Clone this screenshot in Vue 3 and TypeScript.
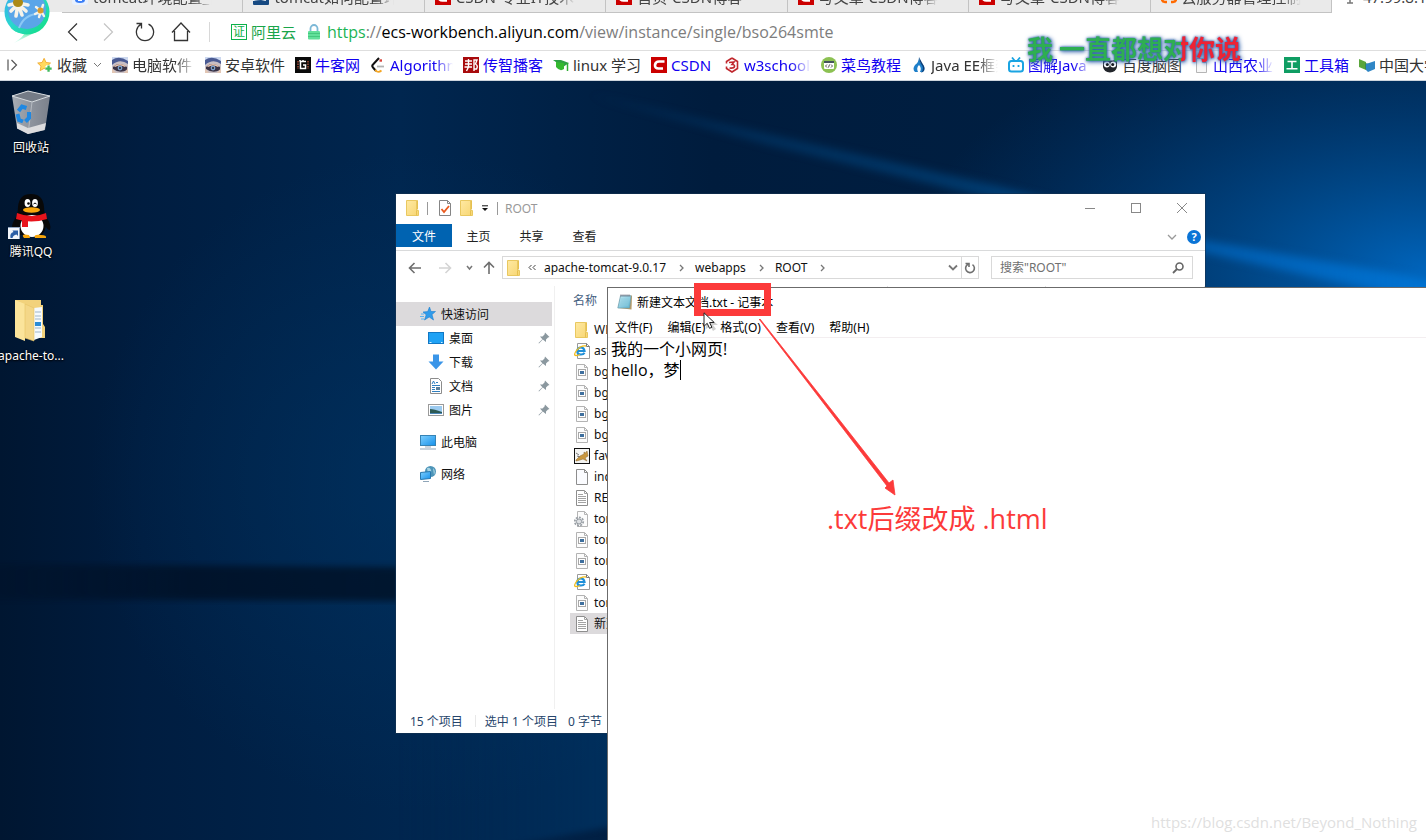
<script setup lang="ts">
import { ref } from 'vue'

interface Tab { icon: string; title: string }
interface Bookmark { icon: string; label: string; width: number; link?: boolean; fade?: boolean }
interface Place { icon: string; label: string; level: number; pinned?: boolean; active?: boolean; gap?: boolean }
interface FileRow { icon: string; name: string; selected?: boolean }

const tabs: Tab[] = [
  { icon: 'paw', title: 'tomcat环境配置_百度' },
  { icon: 'navy', title: 'tomcat如何配置环境' },
  { icon: 'csdn', title: 'CSDN-专业IT技术社区' },
  { icon: 'csdn', title: '首页-CSDN博客' },
  { icon: 'csdn', title: '写文章-CSDN博客' },
  { icon: 'csdn', title: '写文章-CSDN博客' },
  { icon: 'ali', title: '云服务器管理控制台' },
]

const bookmarks: Bookmark[] = [
  { icon: 'anime', label: '电脑软件', width: 63, fade: true },
  { icon: 'anime', label: '安卓软件', width: 60 },
  { icon: 'nowcoder', label: '牛客网', width: 45, link: true },
  { icon: 'leet', label: 'Algorithm', width: 63, link: true, fade: true },
  { icon: 'bang', label: '传智播客', width: 60, link: true },
  { icon: 'cap', label: 'linux 学习', width: 68 },
  { icon: 'csdn', label: 'CSDN', width: 43, link: true },
  { icon: 'w3', label: 'w3school', width: 67, link: true, fade: true },
  { icon: 'runoob', label: '菜鸟教程', width: 60, link: true },
  { icon: 'drop', label: 'Java EE框架', width: 67, fade: true },
  { icon: 'bili', label: '图解Java', width: 64, link: true, fade: true },
  { icon: 'owl', label: '百度脑图', width: 61 },
  { icon: 'page', label: '山西农业大', width: 61, link: true, fade: true },
  { icon: 'tool', label: '工具箱', width: 45, link: true },
  { icon: 'mooc', label: '中国大学', width: 63 },
]

const desktopIcons = [
  { icon: 'bin', label: '回收站' },
  { icon: 'qq', label: '腾讯QQ' },
  { icon: 'bigfolder', label: 'apache-to...' },
]

const ribbon = ['主页', '共享', '查看']
const crumbs = ['apache-tomcat-9.0.17', 'webapps', 'ROOT']

const places: Place[] = [
  { icon: 'star', label: '快速访问', level: 0, active: true },
  { icon: 'desk', label: '桌面', level: 1, pinned: true },
  { icon: 'down', label: '下载', level: 1, pinned: true },
  { icon: 'doc', label: '文档', level: 1, pinned: true },
  { icon: 'pic', label: '图片', level: 1, pinned: true },
  { icon: 'pc', label: '此电脑', level: 0, gap: true },
  { icon: 'net', label: '网络', level: 0, gap: true },
]

const files: FileRow[] = [
  { icon: 'folder', name: 'WEB-INF' },
  { icon: 'ie', name: 'asf-logo-wide.svg' },
  { icon: 'image', name: 'bg-button.png' },
  { icon: 'image', name: 'bg-middle.png' },
  { icon: 'image', name: 'bg-nav.png' },
  { icon: 'image', name: 'bg-upper.png' },
  { icon: 'cat', name: 'favicon.ico' },
  { icon: 'blank', name: 'index.jsp' },
  { icon: 'text', name: 'RELEASE-NOTES.txt' },
  { icon: 'gear', name: 'tomcat.css' },
  { icon: 'image', name: 'tomcat.gif' },
  { icon: 'image', name: 'tomcat.png' },
  { icon: 'ie', name: 'tomcat.svg' },
  { icon: 'image', name: 'tomcat-power.gif' },
  { icon: 'text', name: '新建文本文档.txt', selected: true },
]

const menus = ['文件(F)', '编辑(E)', '格式(O)', '查看(V)', '帮助(H)']
const note = ref('我的一个小网页!\nhello，梦')
const query = ref('')
</script>

<template>
  <div class="screen">
    <svg class="sprite" aria-hidden="true">
      <defs>
        <linearGradient id="gFolder" x1="0" y1="0" x2="1" y2="1">
          <stop offset="0" stop-color="#ffe9a2" /><stop offset="1" stop-color="#f7d673" />
        </linearGradient>
        <linearGradient id="gBlue" x1="0" y1="0" x2="1" y2="1">
          <stop offset="0" stop-color="#7fd0ff" /><stop offset="1" stop-color="#1590ea" />
        </linearGradient>
        <linearGradient id="gRing" x1="0" y1="0" x2="1" y2="1">
          <stop offset="0" stop-color="#38a8f0" /><stop offset=".45" stop-color="#2bd6d0" /><stop offset="1" stop-color="#10e07a" />
        </linearGradient>
        <linearGradient id="gTail" x1="0" y1="0" x2="0" y2="1">
          <stop offset="0" stop-color="#0be06c" /><stop offset="1" stop-color="#8ff3d8" stop-opacity=".3" />
        </linearGradient>
        <linearGradient id="gBin" x1="0" y1="0" x2="1" y2="0">
          <stop offset="0" stop-color="#a7adb5" /><stop offset=".5" stop-color="#8d939d" /><stop offset="1" stop-color="#7b818c" />
        </linearGradient>
        <linearGradient id="gNote" x1="0" y1="0" x2="1" y2="1">
          <stop offset="0" stop-color="#c3eaf4" /><stop offset="1" stop-color="#5eb3d0" />
        </linearGradient>
      </defs>
      <symbol id="folder" viewBox="0 0 16 16">
        <path d="M1.5 .5h10v10h2v5h-12z" fill="url(#gFolder)" stroke="#e9c860" />
        <path d="M11.500 10.500v5M11.500 .5h1v9" fill="none" stroke="#e6c050" />
      </symbol>
      <symbol id="check" viewBox="0 0 16 16">
        <path d="M2.500 .5h8l3 3v12h-11z" fill="#fff" stroke="#858585" />
        <path d="M10.500 .5v3h3" fill="none" stroke="#858585" />
        <path d="M4.500 9l2.500 3 5-6" fill="none" stroke="#ea5a1e" stroke-width="1.800" />
      </symbol>
      <symbol id="csdn" viewBox="0 0 16 16">
        <rect width="16" height="16" fill="#cb0000" />
        <path d="M13.500 4.500H8Q4.500 4.500 4 8q-.2 3.500 3.500 3.500H12" fill="none" stroke="#fff" stroke-width="2.600" />
      </symbol>
      <symbol id="paw" viewBox="0 0 16 16">
        <rect width="16" height="16" rx="3" fill="#e8f1ff" />
        <path d="M3 7a5 5 0 0 1 10 0v4q0 3-5 3t-5-3z" fill="#3b7ef6" /><rect x="6" y="9" width="4" height="3" fill="#fff" />
      </symbol>
      <symbol id="navy" viewBox="0 0 16 16">
        <rect width="16" height="16" rx="1" fill="#174a82" /><path d="M0 8q4 2 7-1 5 0 6 5l-5-1q-4 0-8 1z" fill="#fff" />
      </symbol>
      <symbol id="ali" viewBox="0 0 16 16">
        <path d="M6 3H4Q1 3 1 6v4q0 3 3 3h2M10 3h2q3 0 3 3v4q0 3-3 3h-2" fill="none" stroke="#ff6a00" stroke-width="2.500" />
      </symbol>
      <symbol id="pageT" viewBox="0 0 16 16"><path d="M4 1h4v13M5 14h6" fill="none" stroke="#777" stroke-width="1.500" /></symbol>
      <symbol id="logo" viewBox="0 0 46 44">
        <path d="M7 28q8 8 14 3 0 5-11 12l22-11 6-6z" fill="url(#gTail)" />
        <circle cx="23" cy="12" r="22.500" fill="url(#gRing)" />
        <circle cx="23" cy="10" r="19" fill="#5aa5e8" />
        <path d="M15 28q6-16 25-14" fill="none" stroke="#8cc8f5" stroke-width="2" />
        <g stroke="#f6f3ea" stroke-width="3.600" stroke-linecap="round">
          <path d="M14 3L5 5M14 4L7 11M14 4l-2 12M14 4l4 11M14 4l8 7M14 3l10 2" />
          <path d="M37 11l-5-4M37 11l-6 3M37 11l-2 6M37 11l3 5M37 11l2-6" stroke-width="2.400" />
        </g>
        <ellipse cx="14" cy="2.500" rx="5" ry="4.500" fill="#ac8a16" /><circle cx="36.500" cy="10.500" r="3" fill="#d99a2b" />
      </symbol>
      <symbol id="lock" viewBox="0 0 14 16">
        <path d="M3.500 7V4.500a3.500 3.500 0 0 1 7 0V7" fill="none" stroke="#7cb8d7" stroke-width="1.800" />
        <rect x="1" y="7" width="12" height="8.500" rx="1" fill="#62e09a" /><path d="M1 9.500h12M1 12.500h12" stroke="#45c87f" />
      </symbol>
      <symbol id="fav" viewBox="0 0 18 18">
        <path d="M8 1.500l2.200 4.700 5 .6-3.700 3.500 1 5L8 12.800l-4.500 2.500 1-5L.8 6.800l5-.6z" fill="#ffd95e" stroke="#f0a92c" />
        <path d="M13 9v7M9.500 12.500h7" stroke="#fff" stroke-width="5" /><path d="M13 9.500v7M9.500 13h7" stroke="#3fb95e" stroke-width="2.600" />
      </symbol>
      <symbol id="anime" viewBox="0 0 16 16">
        <rect width="16" height="16" fill="#c9bfc4" /><path d="M0 0h16v5Q8 1 2 6L0 9z" fill="#ccd8ef" /><path d="M0 3Q7-2 16 4v3Q8 1 0 8z" fill="#4b5b93" />
        <path d="M1 10q6-6 14 0v3q-7 4-14-1z" fill="#3a3346" /><path d="M2 9q6-4 12 0l-1 1q-5-3-10 0z" fill="#e8c3ad" />
        <circle cx="8" cy="11" r="2.400" fill="#7ea0cc" /><circle cx="8" cy="11" r="1" fill="#222" />
        <path d="M0 11l4 5H0zM16 11l-4 5h4z" fill="#e2c6b4" />
      </symbol>
      <symbol id="nowcoder" viewBox="0 0 16 16">
        <rect width="16" height="16" fill="#0a0a0a" /><path d="M11 4.500H5.500v7h5V8H8M8 3v2M5 3v1.500" fill="none" stroke="#fff" stroke-width="1.500" />
        <path d="M3 4v8M13 4v8" stroke="#e8694b" stroke-dasharray="1.500 1" />
      </symbol>
      <symbol id="leet" viewBox="0 0 16 16">
        <path d="M9 1L3 7.500q-1.500 1.500 0 3L6 14" fill="none" stroke="#111" stroke-width="2" />
        <path d="M9.500 3.500h2.500" fill="none" stroke="#d8443a" stroke-width="2.400" /><path d="M7 9.500h7" stroke="#b3b3b3" stroke-width="1.800" /><path d="M5 13l2 1.500q2 1 4.500-1" fill="none" stroke="#f5a623" stroke-width="1.800" />
      </symbol>
      <symbol id="bang" viewBox="0 0 16 16">
        <rect width="16" height="16" fill="#a80a0c" />
        <path d="M2 4h7M2 7h7M1.500 10H9M5.500 2v8l-2 4M11 14V3h3l-1.500 4q3 2 1 5h-2" fill="none" stroke="#fff" stroke-width="1.400" />
      </symbol>
      <symbol id="cap" viewBox="0 0 16 16">
        <path d="M0 3l8 0 8 3-6 4z" fill="#2ea043" /><path d="M3 5v5q4 5 8 2V6z" fill="#34b92e" /><path d="M14.500 6v8" stroke="#2eae33" stroke-width="1.500" />
      </symbol>
      <symbol id="w3" viewBox="0 0 16 16">
        <path d="M8 1l5.500 3.500v7L8 15l-5.500-3.500v-2M2.500 6.500v-2L8 1" fill="none" stroke="#c0272d" stroke-width="1.600" />
        <path d="M5 5.500l5-.5L8 7.500q3 0 2.500 2T5.500 11" fill="none" stroke="#c0272d" stroke-width="1.600" />
      </symbol>
      <symbol id="runoob" viewBox="0 0 16 16">
        <circle cx="8" cy="8" r="8" fill="#8cc152" /><rect x="3" y="4" width="10" height="8" rx="1" fill="#fff" /><path d="M3 4h10v2H3z" fill="#44545c" />
        <path d="M6 7.500L4.500 9 6 10.500M10 7.500L11.500 9 10 10.500M8.500 7.500l-1 3" fill="none" stroke="#555" />
      </symbol>
      <symbol id="drop" viewBox="0 0 16 16">
        <path d="M8 0q0 5-4 8-3 4 0 7h3q-2-4 1-7 3 3 1 7h3q3-3 0-7Q8 5 8 0z" fill="#1e7fc9" /><path d="M8 0q3 6 5 9 2 5-3 7 4-5 0-9-2-3-2-7z" fill="#0c3f78" />
      </symbol>
      <symbol id="bili" viewBox="0 0 16 16">
        <rect x="1" y="4" width="14" height="10.500" rx="2.500" fill="none" stroke="#1aa4e2" stroke-width="2" /><path d="M4 .5L6.500 3.500M12 .5L9.500 3.500M5.500 8v2M10.500 8v2" stroke="#1aa4e2" stroke-width="1.800" />
      </symbol>
      <symbol id="owl" viewBox="0 0 16 16">
        <path d="M1 2l4 1.500h6L15 2v8q-1 5-7 5.500Q2 15 1 10z" fill="#22252b" /><circle cx="4.800" cy="7.500" r="3" fill="#fff" /><circle cx="11.200" cy="7.500" r="3" fill="#fff" />
        <circle cx="5.300" cy="7.500" r="1.500" fill="#111" /><circle cx="10.700" cy="7.500" r="1.500" fill="#111" />
      </symbol>
      <symbol id="page" viewBox="0 0 16 16"><path d="M3.500 1.500h6l4 4v10h-10z" fill="#f7f7f7" stroke="#b5b5b5" /><path d="M9.500 1.500v4h4" fill="none" stroke="#b5b5b5" /></symbol>
      <symbol id="tool" viewBox="0 0 16 16"><rect width="16" height="16" fill="#0f9d63" /><path d="M3.500 4.500h9M8 4.500v7M2.500 11.800h11" stroke="#fff" stroke-width="1.600" /></symbol>
      <symbol id="mooc" viewBox="0 0 16 16"><path d="M0 2l7 3v8l-7-3z" fill="#5aa63c" /><path d="M6 6l4 1v7l-4-2z" fill="#3a8c4e" /><path d="M7 7l9-3v8l-7 3-2-2z" fill="#2f86c5" /></symbol>

      <symbol id="bin" viewBox="0 0 46 46">
        <path d="M4 7L20 2l22 5-5 34-17 4-11-6z" fill="url(#gBin)" />
        <path d="M4 7L20 2l22 5-18 6z" fill="#747b86" stroke="#d5dade" />
        <path d="M24 13L20 45" stroke="#b5bac1" fill="none" /><path d="M9 34l11 5 18-5-1.500 7L20 45 9 39.500z" fill="#dcdcde" />
        <g fill="none" stroke="#1f88e2" stroke-width="4"><path d="M10.500 22l3.500-4.500 4.500 1.500M9.500 25l1.500 6 4 1.500M21 23l0 6-3.500 3.500" /></g>
      </symbol>
      <symbol id="qq" viewBox="0 0 46 46">
        <path d="M8 24Q2 33 5 37l5-4zM38 24q6 8 4 13-3 0-5-5z" fill="#080808" />
        <path d="M23 1Q11 1 10 14q0 4-1 7-4 12 3 21h22q7-9 3-21-1-3-1-7Q35 1 23 1z" fill="#080808" />
        <ellipse cx="24" cy="33" rx="11.500" ry="11" fill="#fff" />
        <ellipse cx="19.500" cy="10" rx="2.900" ry="4" fill="#fff" /><ellipse cx="27" cy="10" rx="2.900" ry="4" fill="#fff" /><circle cx="20.500" cy="10.500" r="1.300" /><path d="M25.500 11q1.500-2 3 0" stroke="#000" fill="none" />
        <ellipse cx="23.500" cy="17" rx="8.500" ry="2.700" fill="#f7a60c" />
        <path d="M9 20q15 6 29 0l1 6q-16 5-31 0z" fill="#e8141c" /><path d="M14 25h6v9h-6z" fill="#e8141c" />
        <path d="M16 45q-4-5 5-3l1 3zM27 45q-2-4 6-3 6 0 5 3z" fill="#f7a60c" />
        <rect x="-.5" y="34.500" width="12" height="12" fill="#f2f5fa" stroke="#8ea2bd" /><path d="M2.500 45q-1-5 3-6L4.500 37.500H10V43L8.500 41.500Q5 42 4.500 45z" fill="#2b5ea6" />
      </symbol>
      <symbol id="bigfolder" viewBox="0 0 46 46">
        <path d="M7 3h26v5h2v19l2 3v11H15z" fill="#f2d27c" />
        <path d="M26 11l8-1v30l-8 3z" fill="#f5fafe" /><path d="M27 15h6M27 19h6M27 22h6M27 31h6M27 35h6" stroke="#9fb5c8" /><path d="M27 25h6v4h-6z" fill="#2c8cd6" />
        <path d="M7 3l10 4v37L7 40z" fill="#fbe49b" /><path d="M17 7l9 4v33l-9-3z" fill="#f4d788" stroke="#e6c266" stroke-width=".6" />
      </symbol>

      <symbol id="star" viewBox="0 0 16 16"><path d="M9.500 1l1.500 4.500H15.500l-3.500 3 1.500 5.500-4.300-3L4.500 14l1.700-5.200L3 6l4.700-.4z" fill="#2f9bea" stroke="#1c7fd0" stroke-width=".6" /><path d="M1 8h3M0 10.500h4M1 13h3" stroke="#5bb3ef" /></symbol>
      <symbol id="desk" viewBox="0 0 16 16"><rect x=".5" y="2.500" width="15" height="11" fill="#1fa2f5" stroke="#1177c4" /><path d="M1.500 12.500h2M13 12.500h1.500" stroke="#d6efff" /></symbol>
      <symbol id="down" viewBox="0 0 16 16"><path d="M5 .5h6v7h4.500L8 15.500.500 7.500H5z" fill="#3a95e8" /></symbol>
      <symbol id="doc" viewBox="0 0 16 16"><path d="M2.500 .5h8l3 3v12h-11z" fill="#fff" stroke="#8c8c8c" /><path d="M4 6l1.500-3L7 6M8 4.500h2M4 7.500h8M4 9.500h3M4 11.500h3M4 13.500h8" stroke="#2f7fc0" fill="none" /><rect x="8" y="9" width="4" height="3" fill="#5a7f9a" /></symbol>
      <symbol id="pic" viewBox="0 0 16 16"><rect x=".5" y="2.500" width="15" height="11" fill="#fff" stroke="#9a9a9a" /><rect x="2" y="4" width="12" height="8" fill="#9ccbf0" /><path d="M2 7q4 0 12 3v2H2z" fill="#2d5a55" /><path d="M2 11h12v1H2z" fill="#4a86b8" /></symbol>
      <symbol id="pc" viewBox="0 0 16 16"><rect x=".5" y="1.500" width="15" height="10" fill="url(#gBlue)" stroke="#3683b5" /><path d="M5 13h6" stroke="#9ab" /><path d="M0 15h16" stroke="#8fa5b8" /></symbol>
      <symbol id="net" viewBox="0 0 16 16"><circle cx="10.500" cy="5.500" r="5.500" fill="#4d94b8" /><path d="M7 2q3-1 4 2t-3 4zM13 2q3 3 1 7" fill="#a7d5e4" /><path d="M.5 6.500l10-1v7l-10 1z" fill="url(#gBlue)" stroke="#2878ae" /><path d="M3 15.500h6" stroke="#8fa5b8" /></symbol>
      <symbol id="pin" viewBox="0 0 12 12"><path d="M7 .5l4.500 4.500-1.500.5-2 2 0 2.500L4.800 7.600 1 11.500l-.5-.5 3.900-3.800L2 4.500h2.500l2-2z" fill="#8b989f" /></symbol>

      <symbol id="image" viewBox="0 0 16 16"><path d="M2.500 .5h8l3 3v12h-11z" fill="#fcfcfc" stroke="#b3b3b3" /><path d="M10.500 .5v3h3" fill="none" stroke="#b3b3b3" /><rect x="4.500" y="5.500" width="7" height="6" fill="#fff" stroke="#a8a8a8" /><rect x="6" y="7" width="4" height="3" fill="#3e6f9e" /></symbol>
      <symbol id="text" viewBox="0 0 16 16"><path d="M2.500 .5h8l3 3v12h-11z" fill="#fff" stroke="#8d8d8d" /><path d="M10.500 .5v3h3M4 4.500h5M4 6.500h8M4 8.500h8M4 10.500h8M4 12.500h8" fill="none" stroke="#a3a3a3" /></symbol>
      <symbol id="blank" viewBox="0 0 16 16"><path d="M2.500 .5h8l3 3v12h-11z" fill="#fbfcff" stroke="#8d8d8d" /><path d="M10.500 .5v3h3" fill="none" stroke="#8d8d8d" /></symbol>
      <symbol id="gear" viewBox="0 0 16 16"><path d="M3.500 .5h7l3 3v12h-10z" fill="#fcfcfc" stroke="#b5b5b5" /><path d="M10.500 .5v3h3" fill="none" stroke="#b5b5b5" /><circle cx="5" cy="10.500" r="4.200" fill="none" stroke="#9aa0a6" stroke-width="1.800" stroke-dasharray="2 1.200" /><circle cx="5" cy="10.500" r="2.600" fill="#dde0e3" stroke="#8d949b" /></symbol>
      <symbol id="ie" viewBox="0 0 16 16"><path d="M3.500 .5h9l3 3v12h-12z" fill="#fff" stroke="#9a9a9a" /><path d="M12.500 .5v3h3" fill="none" stroke="#777" /><path d="M3 8h7.500Q10 4.500 7 4.500 3.500 4.500 3.300 8T7 11.500q2.500 0 3.500-1.800" fill="none" stroke="#1f8fd8" stroke-width="2.200" /><path d="M12 3Q7 2 2.500 7.500-1 12.500 2 12.500q2 0 4-1" fill="none" stroke="#f3bd1b" stroke-width="1.300" /></symbol>
      <symbol id="cat" viewBox="0 0 16 16"><rect x=".5" y=".5" width="15" height="15" fill="#f4f4f2" stroke="#111" /><path d="M2 12l4-4 4-2V4l1.500 1L13 3l1 5-3 2 2 3-4-2-3 1-4 1z" fill="#c9973f" stroke="#8a6428" stroke-width=".5" /><path d="M2 5l3 2M3 8l3 1" stroke="#777" /></symbol>
      <symbol id="notepad" viewBox="0 0 16 16"><path d="M3.500 2.500L15 1.500 14.500 15.500 1 14z" fill="#b79a65" /><path d="M3.500 1.800h10.500L12.500 14H.800z" fill="url(#gNote)" stroke="#6a9db0" stroke-width=".7" /><path d="M4 5h8M3.700 7h8M3.500 9h8M3 11h8" stroke="#8fcbdd" stroke-width=".8" /><path d="M4 .5v2M6 .5v2M8 .5v2M10 .5v2M12 .5v2" stroke="#667" /></symbol>
    </svg>

    <header class="chrome">
      <div class="tabstrip">
        <div class="tab" v-for="(t, i) in tabs" :key="i">
          <svg class="i16"><use :href="'#' + t.icon" /></svg><span class="tab-title">{{ t.title }}</span>
        </div>
        <div class="tab current"><svg class="i16"><use href="#pageT" /></svg><span class="tab-title">47.99.8.1</span></div>
      </div>
      <svg class="logo" aria-hidden="true"><use href="#logo" /></svg>
      <nav class="toolbar">
        <button class="tb" aria-label="后退"><svg width="20" height="20" viewBox="0 0 20 20"><path d="M14 1.500L5.500 10l8.500 8.500" fill="none" stroke="#333" stroke-width="1.200" /></svg></button>
        <button class="tb" aria-label="前进"><svg width="20" height="20" viewBox="0 0 20 20"><path d="M5 1.500l8.500 8.500L5 18.500" fill="none" stroke="#c4c4c4" stroke-width="1.200" /></svg></button>
        <button class="tb" aria-label="刷新"><svg width="20" height="20" viewBox="0 0 20 20"><path d="M6.500 2.200a8.600 8.600 0 1 0 7 0M1.500 1.500h5v5" fill="none" stroke="#333" stroke-width="1.300" /></svg></button>
        <button class="tb" aria-label="主页"><svg width="20" height="20" viewBox="0 0 20 20"><path d="M1 10.500L10 1l9 9.500M3.500 9v9.500h13V9" fill="none" stroke="#333" stroke-width="1.300" /></svg></button>
        <span class="tb-sep"></span>
        <span class="cert">证</span><span class="owner">阿里云</span>
        <svg class="lock" width="14" height="16"><use href="#lock" /></svg>
        <a class="url" href="#"><span class="scheme">https</span>://<b>ecs-workbench.aliyun.com</b>/view/instance/single/bso264smte</a>
      </nav>
      <nav class="bookmarks">
        <button class="expand" aria-label="展开"><svg width="12" height="14" viewBox="0 0 12 14"><path d="M1 1.500v11M4.500 2l5 5-5 5" fill="none" stroke="#555" stroke-width="1.200" /></svg></button>
        <button class="fav"><svg width="16" height="16"><use href="#fav" /></svg>收藏<svg class="favchev" width="9" height="6" viewBox="0 0 9 6"><path d="M1 1l3.500 3.500L8 1" fill="none" stroke="#777" /></svg></button>
        <a v-for="(b, i) in bookmarks" :key="i" href="#" class="bm" :class="{ link: b.link }">
          <svg class="i16"><use :href="'#' + b.icon" /></svg><span class="bm-label" :class="{ fade: b.fade }" :style="{ width: b.width + 'px' }">{{ b.label }}</span>
        </a>
      </nav>
      <div class="lyric">我 一直都想对你说</div>
    </header>

    <main class="desktop">
      <svg class="wall" viewBox="0 0 1426 759" preserveAspectRatio="none" aria-hidden="true">
        <defs>
          <linearGradient id="wBase" x1="0" y1="0" x2="1" y2="0">
            <stop offset="0" stop-color="#001631" /><stop offset=".1" stop-color="#001d40" /><stop offset=".28" stop-color="#00264f" /><stop offset=".5" stop-color="#001c3d" /><stop offset="1" stop-color="#002247" />
          </linearGradient>
          <radialGradient id="wMid" gradientUnits="userSpaceOnUse" cx="420" cy="400" r="330">
            <stop offset="0" stop-color="#003565" stop-opacity=".6" /><stop offset="1" stop-color="#003565" stop-opacity="0" />
          </radialGradient>
          <radialGradient id="wGlow" gradientUnits="userSpaceOnUse" cx="1426" cy="190" r="520" gradientTransform="translate(0 91) scale(1 .52)">
            <stop offset="0" stop-color="#0064bb" /><stop offset=".35" stop-color="#004c90" stop-opacity=".85" /><stop offset="1" stop-color="#003a75" stop-opacity="0" />
          </radialGradient>
          <linearGradient id="wBeam" x1="0" y1="0" x2="1" y2="0">
            <stop offset="0" stop-color="#004b88" stop-opacity=".25" /><stop offset=".45" stop-color="#004b88" stop-opacity=".6" /><stop offset=".75" stop-color="#0064bb" stop-opacity=".8" /><stop offset="1" stop-color="#0074d4" />
          </linearGradient>
          <linearGradient id="wBand" x1="0" y1="0" x2="1" y2="0">
            <stop offset="0" stop-color="#000814" stop-opacity=".1" /><stop offset=".5" stop-color="#000814" stop-opacity=".55" /><stop offset="1" stop-color="#000814" stop-opacity=".6" />
          </linearGradient>
          <linearGradient id="wFoot" x1="0" y1="0" x2="1" y2="0">
            <stop offset="0" stop-color="#004078" stop-opacity="0" /><stop offset="1" stop-color="#004078" stop-opacity=".5" />
          </linearGradient>
          <filter id="soft" color-interpolation-filters="sRGB"><feGaussianBlur stdDeviation="3" /></filter>
          <filter id="soft2" color-interpolation-filters="sRGB"><feGaussianBlur stdDeviation="4" /></filter>
        </defs>
        <rect width="1426" height="759" fill="url(#wBase)" />
        <rect width="1426" height="759" fill="url(#wMid)" />
        <rect width="1426" height="759" fill="url(#wGlow)" />
        <path d="M590 14L780 56 1002 106 1206 160 1440 200v24L1206 172 1002 120 770 64z" fill="url(#wBeam)" filter="url(#soft2)" />
        <path d="M-20 483l420 3v34l-420-2z" fill="url(#wBand)" filter="url(#soft)" />
        <path d="M400 640h220v104l-220 40z" fill="url(#wFoot)" filter="url(#soft)" />
      </svg>

      <ul class="icons">
        <li v-for="d in desktopIcons" :key="d.icon"><svg class="i46"><use :href="'#' + d.icon" /></svg><span>{{ d.label }}</span></li>
      </ul>

      <section class="explorer">
        <div class="ex-title">
          <svg class="i16"><use href="#folder" /></svg><i class="bar"></i>
          <svg class="i16"><use href="#check" /></svg><svg class="i16"><use href="#folder" /></svg>
          <svg width="8" height="7" viewBox="0 0 8 7"><path d="M1 .8h6" stroke="#111" /><path d="M1 3h6L4 6z" fill="#111" /></svg><i class="bar"></i>
          <span class="ex-name">ROOT</span>
          <div class="winbtns">
            <button aria-label="最小化"><svg width="12" height="12" viewBox="0 0 12 12"><path d="M1 6.500h10" stroke="#888" /></svg></button>
            <button aria-label="最大化"><svg width="12" height="12" viewBox="0 0 12 12"><rect x="1.500" y="1.500" width="9" height="9" fill="none" stroke="#888" /></svg></button>
            <button aria-label="关闭"><svg width="12" height="12" viewBox="0 0 12 12"><path d="M1 1l10 10M11 1L1 11" stroke="#888" /></svg></button>
          </div>
        </div>
        <div class="ribbon">
          <button class="file">文件</button>
          <button v-for="r in ribbon" :key="r" class="rtab">{{ r }}</button>
          <svg class="rchev" width="10" height="6" viewBox="0 0 10 6"><path d="M1 1l4 4 4-4" fill="none" stroke="#999" stroke-width="1.300" /></svg>
          <button class="help" aria-label="帮助">?</button>
        </div>
        <div class="addr">
          <button aria-label="返回"><svg width="14" height="12" viewBox="0 0 14 12"><path d="M13 6H1.500M6.500 1l-5 5 5 5" fill="none" stroke="#6e6e6e" stroke-width="1.600" /></svg></button>
          <button aria-label="前进"><svg width="14" height="12" viewBox="0 0 14 12"><path d="M1 6h11.500M7.500 1l5 5-5 5" fill="none" stroke="#d4d4d4" stroke-width="1.600" /></svg></button>
          <button class="tiny" aria-label="最近"><svg width="7" height="6" viewBox="0 0 7 6"><path d="M1 1l2.500 3L6 1" fill="none" stroke="#777" stroke-width="1.500" /></svg></button>
          <button class="up" aria-label="上移"><svg width="12" height="14" viewBox="0 0 12 14"><path d="M6 13V2M1 6.500l5-5 5 5" fill="none" stroke="#6e6e6e" stroke-width="1.600" /></svg></button>
          <div class="crumbs">
            <svg class="i16"><use href="#folder" /></svg><svg class="dbl" width="8" height="7" viewBox="0 0 8 7"><path d="M3.500 1L1 3.500 3.500 6M7.500 1L5 3.500 7.500 6" fill="none" stroke="#444" /></svg>
            <template v-for="c in crumbs" :key="c"><button class="crumb">{{ c }}</button><svg width="5" height="8" viewBox="0 0 5 8"><path d="M1 1l3 3-3 3" fill="none" stroke="#777" stroke-width="1.300" /></svg></template>
            <svg class="drop" width="10" height="7" viewBox="0 0 10 7"><path d="M1 1.500l4 4 4-4" fill="none" stroke="#777" stroke-width="1.800" /></svg>
            <button class="refresh" aria-label="刷新"><svg width="12" height="12" viewBox="0 0 12 12"><path d="M4 2.300a4.400 4.400 0 1 0 4.500.3M1.500 1.500H5V5" fill="none" stroke="#707070" stroke-width="1.600" /></svg></button>
          </div>
          <label class="search"><input v-model="query" type="text" aria-label="搜索" placeholder='搜索"ROOT"' /><svg width="12" height="12" viewBox="0 0 12 12"><circle cx="7.500" cy="4.500" r="3.500" fill="none" stroke="#666" stroke-width="1.600" /><path d="M5 7L1 11" stroke="#666" stroke-width="1.800" /></svg></label>
        </div>
        <div class="ex-body">
          <ul class="places">
            <li v-for="p in places" :key="p.label" :class="{ active: p.active, sub: p.level === 1, gap: p.gap }">
              <svg class="i16"><use :href="'#' + p.icon" /></svg><span>{{ p.label }}</span>
              <svg v-if="p.pinned" class="pin" width="12" height="12"><use href="#pin" /></svg>
            </li>
          </ul>
          <table class="list">
            <thead><tr><th>名称</th><th></th><th></th><th></th></tr></thead>
            <tbody>
              <tr v-for="f in files" :key="f.name" :class="{ selected: f.selected }">
                <td colspan="4"><div class="fname"><svg class="i16"><use :href="'#' + f.icon" /></svg><span>{{ f.name }}</span></div></td>
              </tr>
            </tbody>
          </table>
        </div>
        <footer class="status"><span>15 个项目</span><i></i><span>选中 1 个项目</span><span class="bytes">0 字节</span></footer>
      </section>

      <section class="notepad">
        <div class="np-title"><svg class="i16"><use href="#notepad" /></svg><span>新建文本文档.txt - 记事本</span></div>
        <div class="np-menu"><button v-for="m in menus" :key="m">{{ m }}</button></div>
        <div class="np-edit"><textarea v-model="note" aria-label="文本" spellcheck="false"></textarea><i class="caret"></i></div>
        <p class="watermark">https://blog.csdn.net/Beyond_Nothing</p>
      </section>

      <div class="redbox"></div>
      <svg class="arrow" width="140" height="180" viewBox="0 0 140 180" aria-hidden="true"><path d="M0 0h1L130 164l4-3 2 15-10-7 2-2z" fill="#fc3a3a" stroke="#fc3a3a" stroke-width=".8" /></svg>
      <svg class="pointer" width="16" height="20" viewBox="0 0 16 20" aria-hidden="true"><path d="M3 3v14l4-3 3 5 3-2-3-4h5z" fill="#777" opacity=".35" /><path d="M1 .8v13.500l3.200-3 2.300 5 2.400-1-2.300-4.800h4.600z" fill="#fff" stroke="#222" /></svg>
      <p class="callout">.txt后缀改成 .html</p>
    </main>
  </div>
</template>

<style>
html, body { margin: 0; }
</style>

<style scoped>
.screen { display: flex; flex-direction: column; min-height: 100vh; overflow: hidden; position: relative; font-family: "Noto Sans", "Noto Sans CJK SC", sans-serif; font-size: 12px; color: #111; background: #fff; }
.sprite { position: absolute; width: 0; height: 0; }
button { border: 0; padding: 0; margin: 0; background: none; font: inherit; color: inherit; display: inline-flex; align-items: center; justify-content: center; white-space: nowrap; }
a { text-decoration: none; color: inherit; }
ul { list-style: none; margin: 0; padding: 0; }
svg { display: block; flex: none; }
p { margin: 0; }
.i16 { width: 16px; height: 16px; }
.i46 { width: 46px; height: 46px; overflow: visible; }

.chrome { position: relative; background: #fff; flex: none; }
.tabstrip { display: flex; align-items: flex-end; height: 13px; overflow: hidden; padding-left: 62px; background: linear-gradient(#eaeaea, #eaeaea) 0 0 / 62px 12px no-repeat; box-sizing: border-box; }
.tab { flex: 1 1 0; min-width: 0; box-sizing: border-box; height: 32px; display: flex; align-items: center; gap: 5px; padding: 0 30px 0 10px; background: #eaeaea; border-right: 1px solid #c3c3c3; border-bottom: 1px solid #c3c3c3; }
.tab-title { flex: 1; overflow: hidden; white-space: nowrap; font-size: 15px; line-height: 20px; color: #444; mask-image: linear-gradient(90deg, #000 85%, transparent); }
.tab.current { flex: 0 0 94px; background: #fff; border-color: transparent; padding-right: 0; }
.tab.current .tab-title { mask-image: none; }
.logo { position: absolute; left: 4px; top: 0; width: 46px; height: 44px; }
.toolbar { display: flex; align-items: center; height: 38px; padding-left: 55px; border-bottom: 1px solid #dedede; box-sizing: border-box; }
.tb { width: 36px; height: 30px; }
.tb-sep { width: 1px; height: 20px; background: #d8d8d8; margin: 0 21px 0 10px; }
.cert { box-sizing: border-box; width: 16px; height: 16px; border: 1px solid #0cb14b; color: #0cb14b; font-size: 12px; line-height: 14px; text-align: center; overflow: hidden; }
.owner { margin-left: 4px; font-size: 15px; color: #19a54a; }
.lock { margin: 0 6px 0 11px; }
.url { font-family: "Open Sans", sans-serif; font-size: 16px; color: #7d7d7d; white-space: nowrap; }
.url .scheme { color: #1cb455; }
.url b { color: #000; font-weight: 400; }
.bookmarks { display: flex; align-items: center; height: 30px; padding-bottom: 2px; border-bottom: 1px solid #cdd5dd; box-sizing: border-box; font-size: 15px; color: #333; overflow: hidden; }
.expand { width: 12px; margin: 0 18px 0 7px; }
.fav { gap: 4px; margin-right: 10px; width: 65px; justify-content: flex-start; }
.favchev { margin-left: 2px; }
.bm { display: flex; align-items: center; gap: 4px; margin-right: 10px; flex: none; }
.bm.link { color: #1100f0; }
.bm-label { display: block; overflow: hidden; white-space: nowrap; line-height: 22px; }
.bm-label.fade { mask-image: linear-gradient(90deg, #000 70%, transparent); }
.lyric { position: absolute; left: 1027px; top: 29px; white-space: nowrap; font: 700 26px/38px "Noto Sans CJK SC", sans-serif; color: transparent; background: linear-gradient(90deg, #2eae52 72%, #ee2233 72%); background-clip: text; filter: drop-shadow(0 0 1px #2b5da8) drop-shadow(1px 1px 2px #3868b0); }

.desktop { position: relative; flex: 1; min-height: 759px; background: #001f42; overflow: hidden; }
.wall { position: absolute; inset: 0; width: 100%; height: 100%; }
.icons { position: absolute; left: 0; top: 8px; width: 62px; display: flex; flex-direction: column; gap: 36px; }
.icons li { display: flex; flex-direction: column; align-items: center; gap: 4px; color: #fff; text-shadow: 0 1px 2px #000, 0 0 2px #000; }
.icons span { line-height: 18px; white-space: nowrap; }

.explorer { position: absolute; left: 396px; right: 221px; top: 113px; background: #fff; box-shadow: 0 0 0 1px rgba(20, 50, 80, .6); }
.ex-title { display: flex; align-items: center; height: 30px; box-sizing: border-box; padding: 0 0 2px 9px; }
.ex-title .bar { width: 1px; height: 13px; background: #999; margin: 0 9px 0 6px; }
.ex-title .i16 + .i16 { margin: 0 6px; }
.ex-title .i16 + .i16 + svg { margin-right: 2px; }
.ex-name { color: #999; margin-left: -2px; }
.winbtns { margin-left: auto; display: flex; }
.winbtns button { width: 46px; height: 28px; }
.ribbon { display: flex; align-items: flex-start; height: 27px; box-sizing: border-box; border-bottom: 1px solid #d9dadb; color: #222; }
.file { width: 56px; height: 23px; background: #0063b1; color: #fff; }
.rtab { width: 53px; height: 24px; }
.rchev { margin: 10px 10px 0 auto; }
.help { width: 14px; height: 14px; margin: 6px 4px 0 0; border-radius: 50%; background: #0a74d6; color: #fff; font-size: 11px; font-weight: 700; line-height: 14px; }
.addr { display: flex; align-items: center; padding: 5px 12px 7px 10px; }
.addr > button { width: 18px; height: 23px; margin-right: 12px; }
.addr > .tiny { width: 7px; margin-right: 9px; }
.addr > .up { width: 14px; margin-right: 6px; }
.crumbs { flex: 1; display: flex; align-items: center; height: 23px; box-sizing: border-box; border: 1px solid #d9d9d9; padding-left: 3px; }
.dbl { margin: 0 8px 0 6px; }
.crumb { margin-right: 13px; }
.crumb + svg { margin-right: 11px; }
.drop { margin-left: auto; margin-right: 3px; }
.refresh { width: 17px; height: 21px; border-left: 1px solid #d9d9d9; }
.search { display: flex; align-items: center; width: 202px; height: 23px; box-sizing: border-box; border: 1px solid #d9d9d9; margin-left: 12px; padding: 0 8px; }
.search input { flex: 1; min-width: 0; border: 0; outline: 0; padding: 0; background: none; font: inherit; color: #666; }
.search input::placeholder { color: #707070; opacity: 1; }
.ex-body { display: flex; min-height: 423px; }
.places { width: 158px; padding-top: 16px; border-right: 1px solid #f0f0f0; }
.places li { display: flex; align-items: center; height: 24px; padding-left: 24px; gap: 5px; margin-right: 2px; }
.places .sub { padding-left: 32px; }
.places .gap { margin-top: 8px; }
.places .active { background: #dcdadc; }
.pin { margin: 0 2px 0 auto; }
.list { flex: 1; margin-left: 15px; border-collapse: collapse; table-layout: fixed; align-self: flex-start; width: 635px; }
.list th { height: 33px; padding: 0 0 6px 3px; box-sizing: border-box; text-align: left; font-weight: 400; color: #44607f; border-right: 1px solid #e2e2e2; }
.list td { padding: 0; height: 21px; }
.fname { display: flex; align-items: center; gap: 4px; padding-left: 4px; height: 21px; line-height: 21px; white-space: nowrap; }
.selected { background: #dcdadc; }
.status { display: flex; align-items: center; height: 24px; padding-left: 14px; color: #26456b; }
.status i { width: 1px; height: 12px; background: #e8e8e8; margin: 0 9px 0 12px; }
.bytes { margin-left: 10px; }

.notepad { position: absolute; left: 607px; right: 0; top: 206px; bottom: 0; background: #fff; border-left: 1px solid #6b6b6b; border-top: 1px solid #6b6b6b; display: flex; flex-direction: column; color: #000; }
.np-title { display: flex; align-items: center; gap: 4px; height: 28px; padding-left: 9px; }
.np-menu { display: flex; gap: 15px; height: 21px; padding-left: 7px; border-bottom: 1px solid #f3eef0; }
.np-edit { position: relative; flex: 1; display: flex; }
textarea { flex: 1; border: 0; outline: 0; resize: none; padding: 1px 3px; font: 400 16px/21px "Open Sans", "Noto Sans CJK SC", sans-serif; color: #000; background: none; }
.caret { position: absolute; left: 72px; top: 22px; width: 1px; height: 20px; background: #000; }
.watermark { position: absolute; right: 9px; bottom: 6px; font-family: "Open Sans", sans-serif; font-size: 15px; line-height: 24px; color: #dfdfdf; }
.redbox { position: absolute; left: 694px; top: 202px; width: 77px; height: 33px; box-sizing: border-box; border: 7px solid #fc3a3a; }
.arrow { position: absolute; left: 759px; top: 238px; }
.pointer { position: absolute; left: 703px; top: 231px; }
.callout { position: absolute; left: 827px; top: 418px; font-family: "Open Sans", "Noto Sans CJK SC", sans-serif; font-size: 27px; line-height: 40px; color: #fc3a3a; white-space: nowrap; }
</style>
